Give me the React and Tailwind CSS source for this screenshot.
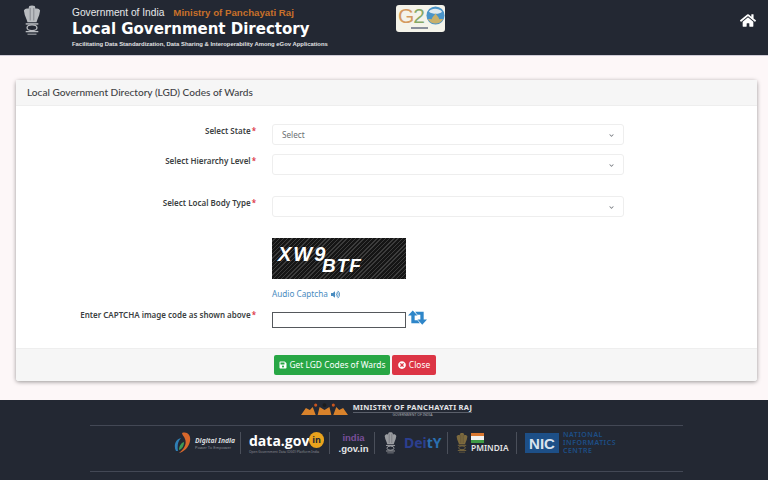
import { FaHome, FaSave, FaTimesCircle, FaVolumeUp, FaChevronDown } from 'react-icons/fa'

function Emblem({ className, color = '#b9bcc0' }) {
  return (
    <svg viewBox="0 0 20 34" className={className} fill={color}>
      <path d="M7 1c2-1 4-1 6 0l1 3c2-1 4 0 5 2l-1 5-2 5-1 3H5l-1-3-2-5-1-5c1-2 3-3 5-2z" />
      <path d="M8 3v14M12 3v14" stroke="#232833" strokeWidth="0.7" opacity="0.55" />
      <rect x="3" y="20" width="14" height="1.6" />
      <ellipse cx="10" cy="25" rx="5.5" ry="3.2" fill="none" stroke={color} strokeWidth="1.5" />
      <rect x="3" y="28.6" width="14" height="1.5" />
      <path d="M5 31.5h10V33H5z" opacity="0.7" />
    </svg>
  )
}

function PanchayatLogo() {
  return (
    <svg viewBox="0 0 48 14" className="w-[47px] h-[14px] shrink-0">
      <path d="M0 13 5 6l4 2 3-3 3 8zM17 13l2-8 5 3 5-3 2 8zM33 13l3-8 3 3 4-2 5 7z" fill="#d9822b" />
      <circle cx="24" cy="3" r="2" fill="#1c1c1c" />
      <circle cx="15" cy="3" r="1.6" fill="#c9551f" />
      <circle cx="33" cy="3" r="1.6" fill="#c9551f" />
    </svg>
  )
}

function G20Logo() {
  return (
    <div className="w-[49px] h-[27px] pl-[2px] bg-[#f4f3ea] rounded-[3px] flex flex-col items-start">
      <div className="flex items-center h-[21px] font-['Liberation_Sans',sans-serif] text-[21px] leading-[21px]">
        <span className="text-[#d59a5f]">G</span>
        <span className="text-[#86a866] -ml-[1px]">2</span>
        <svg viewBox="0 0 20 20" className="w-[19px] h-[19px] shrink-0 ml-[1px]">
          <circle cx="10" cy="10" r="9.5" fill="#4a94c8" />
          <path d="M3 6c3-4 10-4 14 0-3 3-10 3-14 0z" fill="#dfe9ee" />
          <path d="M2 14c3-1 3 0 4 0 1-3 3-4 4-6 1 2 3 3 4 6 1 0 1-1 4 0-3 6-13 6-16 0z" fill="#c9b06a" />
        </svg>
      </div>
      <div className="w-[17px] h-[2px] ml-[13px] mt-[1px] bg-[#8a8f9c]" />
    </div>
  )
}

function RefreshIcon() {
  return (
    <svg viewBox="-0.5 0 20 15" className="ml-[2px] mt-[2px] w-[19px] h-[15px] shrink-0" fill="#2e86c9">
      <path d="M4.500 0 9.500 5.500H6.500V10.500H9.500L12 13.500H3V5.500H-0.500z" />
      <path d="M14.500 15 9.500 9.500H12.500V4.500H9.500L7 1.500H16V9.500H19.500z" />
    </svg>
  )
}

function Label({ children }) {
  return (
    <label className="w-[240px] pr-[16px] text-right text-[8px] leading-[14px] font-semibold text-[#3c3f42] shrink-0">
      {children}
      <span className="text-[#dc3545] text-[8px] align-top ml-[1px]">*</span>
    </label>
  )
}

function SelectBox({ value }) {
  return (
    <div className="w-[352px] h-[21px] pl-[9px] pr-[9px] pt-[1px] flex items-center justify-between bg-white border border-[#eeeeee] rounded-[3px] text-[8.2px] text-[#6c6f73]">
      <span>{value}</span>
      <FaChevronDown className="w-[5px] h-[5px] text-[#777b80]" />
    </div>
  )
}

function Sep() {
  return <div className="w-px h-[22px] bg-[#4a4f5a] shrink-0" />
}

export default function App() {
  return (
    <div className="w-[768px] h-[480px] overflow-hidden bg-[#fdf7f8] font-['Noto_Sans',sans-serif]">
      {/* Header */}
      <header className="h-[56px] bg-[#232833] flex items-start border-b border-[#cfcbd6]">
        <Emblem className="w-[18px] h-[31px] ml-[23px] mt-[5px] shrink-0" />
        <div className="ml-[31px] mt-[6px] w-[255px] shrink-0 font-['Liberation_Sans',sans-serif]">
          <div className="text-[10.2px] leading-[14px] text-[#e6e7e9] whitespace-nowrap">
            Government of India
            <span className="ml-[9px] text-[9.7px] text-[#c8702a] font-bold">Ministry of Panchayati Raj</span>
          </div>
          <div className="text-[15px] leading-[19px] font-bold text-white font-['DejaVu_Sans',sans-serif] whitespace-nowrap">Local Government Directory</div>
          <div className="text-[5.9px] leading-[11px] font-bold text-[#e0e1e3] whitespace-nowrap">
            Facilitating Data Standardization, Data Sharing &amp; Interoperability Among eGov Applications
          </div>
        </div>
        <div className="ml-[69px] mt-[5px]">
          <G20Logo />
        </div>
        <FaHome className="ml-auto mr-[12px] mt-[13px] w-[16px] h-[15px] text-white" />
      </header>

      {/* Card */}
      <main className="pt-[24px] px-[16px]">
        <div className="w-[741px] h-[301px] bg-white rounded-[3px] shadow-[0_1px_4px_rgba(0,0,0,0.4)] flex flex-col">
          <div className="h-[26px] bg-[#f6f6f6] border-b border-[#eeeeee] pl-[11px] flex items-center text-[10.1px] font-['Lato',sans-serif] font-medium text-[#3f4245]">
            Local Government Directory (LGD) Codes of Wards
          </div>
          <div className="flex-1 pt-[18px] pl-[16px]">
            <div className="flex items-start">
              <Label>Select State</Label>
              <SelectBox value="Select" />
            </div>
            <div className="flex items-start mt-[9px]">
              <Label>Select Hierarchy Level</Label>
              <SelectBox />
            </div>
            <div className="flex items-start mt-[21px]">
              <Label>Select Local Body Type</Label>
              <SelectBox />
            </div>
            <div className="ml-[240px] mt-[21px] w-[134px] h-[41px] bg-[repeating-linear-gradient(135deg,#151515_0,#151515_2px,#3c3c3c_2px,#3c3c3c_3px)] relative font-['Liberation_Sans',sans-serif] font-bold italic text-white">
              <span className="absolute left-[6px] top-[6px] text-[20px] leading-[20px] tracking-[2px]">XW9</span>
              <span className="absolute left-[50px] top-[18px] text-[19px] leading-[20px] tracking-[1px]">BTF</span>
            </div>
            <div className="ml-[240px] mt-[9px] flex items-center gap-[3px] text-[8.2px] leading-[12px] text-[#4a8cc0]">
              Audio Captcha
              <FaVolumeUp className="w-[9px] h-[9px]" />
            </div>
            <div className="flex items-start mt-[8px]">
              <Label>Enter CAPTCHA image code as shown above</Label>
              <input className="w-[134px] h-[16px] mt-[4px] border border-[#55585c] bg-white" />
              <RefreshIcon />
            </div>
          </div>
          <div className="h-[33px] bg-[#f6f6f6] border-t border-[#eeeeee] flex items-center pl-[258px] gap-[2px] rounded-b-[3px]">
            <button className="h-[20px] w-[116px] bg-[#28a745] rounded-[2px] flex items-center justify-center gap-[3px] text-[8.4px] text-white whitespace-nowrap">
              <FaSave className="w-[8px] h-[8px] shrink-0" />
              Get LGD Codes of Wards
            </button>
            <button className="h-[20px] w-[44px] bg-[#dc3545] rounded-[2px] flex items-center justify-center gap-[3px] text-[8.4px] text-white">
              <FaTimesCircle className="w-[8px] h-[8px] shrink-0" />
              Close
            </button>
          </div>
        </div>
      </main>

      {/* Footer */}
      <footer className="mt-[19px] h-[80px] bg-[#232833] pl-[90px]">
        <div className="h-[26px] w-[593px] border-b border-[#434855] flex items-start justify-center gap-[5px] pt-[2px]">
          <PanchayatLogo />
          <div className="text-center pt-[1px]">
            <div className="text-[7.5px] leading-[9px] font-bold tracking-[0.25px] text-[#e4e5e7] whitespace-nowrap">MINISTRY OF PANCHAYATI RAJ</div>
            <div className="text-[3.5px] leading-[4px] text-[#a9acb3] border-t border-[#5a5f6a]">GOVERNMENT OF INDIA</div>
          </div>
        </div>
        <div className="h-[46px] w-[593px] border-b border-[#434855] flex items-center pl-[84px] pb-[11px]">
          {/* Digital India */}
          <svg viewBox="0 0 18 22" className="w-[18px] h-[22px] shrink-0">
            <path d="M8 1c6-2 9 3 8 8-1 6-6 11-11 12 5-4 8-9 6-14-1-3-3-4-3-6z" fill="#d8672b" />
            <path d="M2 19C-1 13 2 7 7 6c-3 3-4 8-3 13z" fill="#2f7fb5" />
            <path d="M5 18c0-4 2-7 5-8 0 4-2 7-5 8z" fill="#3f9a55" />
          </svg>
          <div className="ml-[3px] w-[40px] shrink-0">
            <div className="text-[6.8px] leading-[8px] italic font-bold text-[#d7d9dc] whitespace-nowrap">Digital India</div>
            <div className="text-[4px] leading-[5px] text-[#8b8f96] whitespace-nowrap">Power To Empower</div>
          </div>
          <div className="ml-[5px] mr-[8px]"><Sep /></div>
          <div className="w-[75px] shrink-0">
            <div className="flex items-center justify-between h-[17px] font-['Open_Sans',sans-serif] text-[14px] leading-[17px] font-bold text-white">
              data.gov
              <span className="w-[16px] h-[16px] rounded-full bg-[#e9a21d] text-[#232833] text-[9px] leading-[16px] text-center">in</span>
            </div>
            <div className="text-[3.3px] leading-[6px] text-[#8b8f96] whitespace-nowrap">Open Government Data (OGD) Platform India</div>
          </div>
          <div className="ml-[5px] mr-[8px]"><Sep /></div>
          <div className="w-[31px] shrink-0 text-center font-['Liberation_Sans',sans-serif] font-bold">
            <div className="text-[9.5px] leading-[11px] text-[#7a4f9a]">india</div>
            <div className="text-[9.5px] leading-[11px] text-[#e4e5e7]">.gov.in</div>
          </div>
          <div className="ml-[5px] mr-[9px]"><Sep /></div>
          <Emblem className="w-[13px] h-[22px] shrink-0" color="#9a9ca0" />
          <div className="ml-[7px] w-[38px] shrink-0 text-[14px] leading-none font-bold text-[#2c3f8f]">Dei<span className="text-[#2a6fb0]">tY</span></div>
          <div className="ml-[5px] mr-[8px]"><Sep /></div>
          <Emblem className="w-[12px] h-[22px] shrink-0" color="#7d6a3e" />
          <div className="ml-[3px] w-[39px] shrink-0 flex flex-col">
            <div className="w-[13px] h-[10px] bg-[linear-gradient(#d9772f_0,#d9772f_33%,#f2f2f2_33%,#f2f2f2_66%,#3f9a45_66%)]" />
            <div className="text-[8.4px] leading-[10px] font-semibold text-[#e4e5e7] whitespace-nowrap">PMINDIA</div>
          </div>
          <div className="ml-[6px] mr-[8px]"><Sep /></div>
          <div className="w-[34px] h-[20px] shrink-0 bg-[#1d4f87] flex items-center justify-center text-[15px] leading-none font-extrabold text-[#d8e2ee] font-['Liberation_Sans',sans-serif]">NIC</div>
          <div className="ml-[4px] text-[7px] leading-[8px] font-semibold tracking-[0.5px] text-[#1d4f87] whitespace-nowrap">
            <div>NATIONAL</div>
            <div>INFORMATICS</div>
            <div>CENTRE</div>
          </div>
        </div>
      </footer>
    </div>
  )
}
